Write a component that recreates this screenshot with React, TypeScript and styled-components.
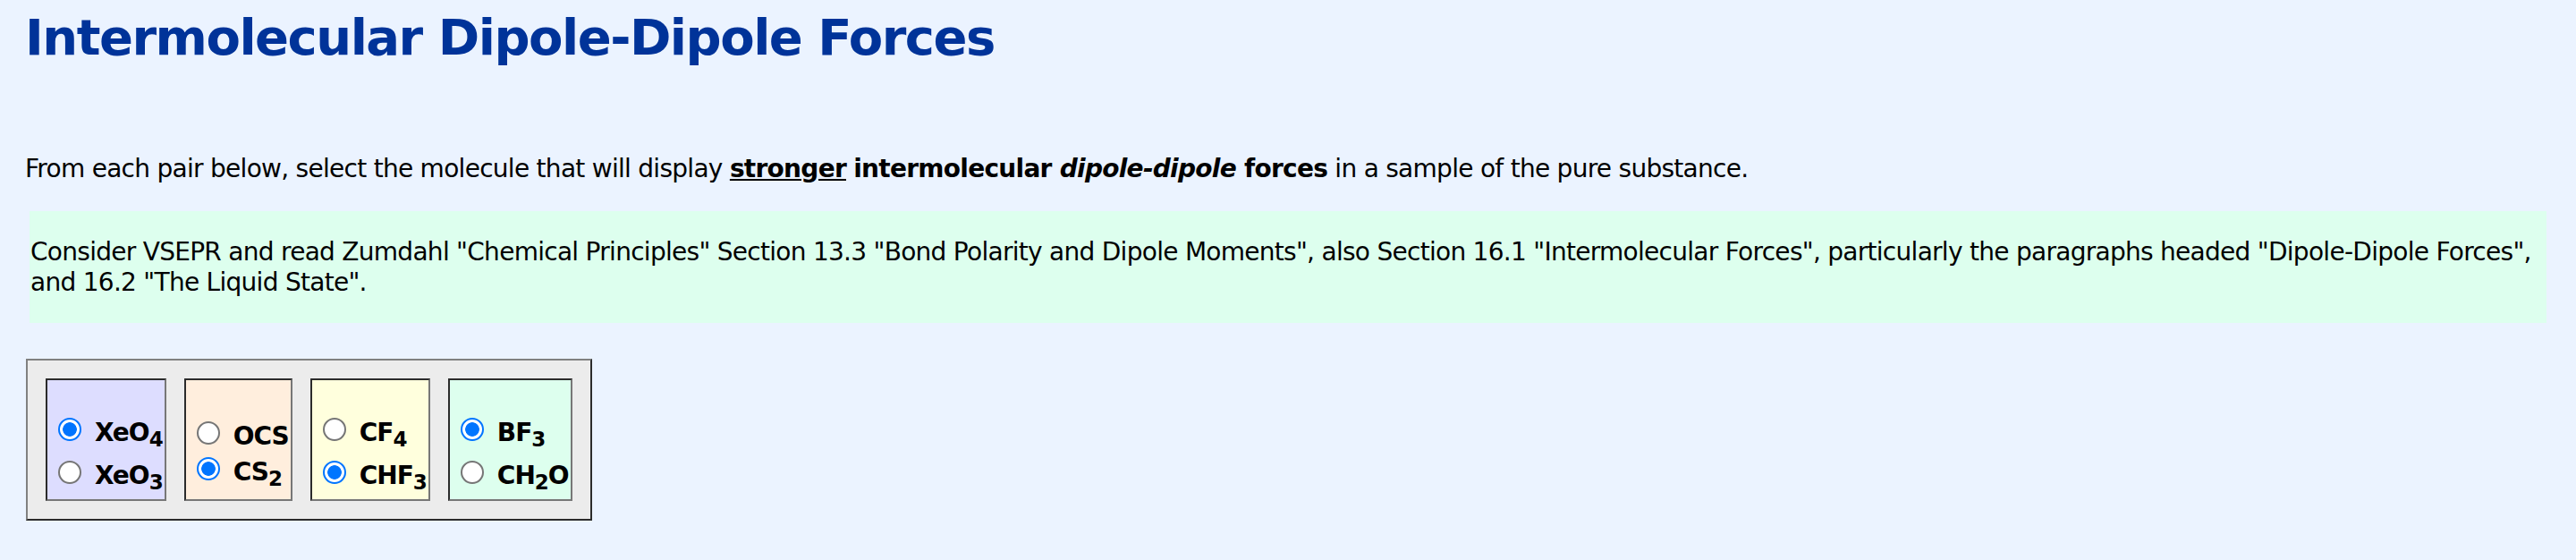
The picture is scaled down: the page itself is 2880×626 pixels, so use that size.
import { createGlobalStyle, styled } from "styled-components";

const GlobalStyle = createGlobalStyle`
  html, body {
    margin: 0;
    padding: 0;
    background: #ebf3ff;
  }
  body {
    font-family: "DejaVu Sans", Verdana, sans-serif;
    color: #000;
  }
`;

const Page = styled.div`
  padding: 8px 28px 40px;
  font-size: 28px;
  line-height: 34px;
  letter-spacing: -0.72px;
`;

const Title = styled.h1`
  margin: 0;
  font-size: 56px;
  line-height: 68px;
  font-weight: 700;
  letter-spacing: -1.5px;
  color: #003399;
`;

const Intro = styled.p`
  margin: 96px 0 0;
`;

const Notice = styled.div`
  margin: 30px 5px 0;
  padding: 29px 2px 28px 1px;
  background: #ddffee;
`;

const Quiz = styled.div`
  display: inline-flex;
  align-items: stretch;
  gap: 20px;
  margin: 40px 0 0 1px;
  padding: 20px;
  background: #ececec;
  border: 2px solid;
  border-color: #808080 #2b2b2b #2b2b2b #808080;
`;

const Pair = styled.div<{ $bg: string }>`
  display: flex;
  flex-direction: column;
  justify-content: center;
  padding: 31px 2px 6px;
  background: ${(p) => p.$bg};
  border: 2px solid;
  border-color: #2b2b2b #777 #777 #2b2b2b;
`;

const Option = styled.label<{ $sub: boolean }>`
  display: flex;
  align-items: flex-start;
  height: ${(p) => (p.$sub ? 48 : 40)}px;
  padding-top: 11px;
  box-sizing: border-box;
`;

const Radio = styled.input`
  appearance: none;
  flex: none;
  box-sizing: border-box;
  width: 26px;
  height: 26px;
  margin: 0 6px 0 10px;
  border: 2px solid #767676;
  border-radius: 50%;
  background: #fff;

  &:checked {
    border-color: #0075ff;
    background: radial-gradient(
      circle closest-side,
      #0075ff 0 68%,
      #fff 74%
    );
  }
`;

const Formula = styled.span`
  padding-left: 9px;
  font-size: 28px;
  font-weight: 700;
  line-height: 33px;
  letter-spacing: -1px;
  white-space: nowrap;

  sub {
    font-size: 23px;
    line-height: 0;
    vertical-align: -5.5px;
  }
`;

type Molecule = { parts: (string | [string])[]; checked?: boolean };

const pairs: { bg: string; items: Molecule[] }[] = [
  {
    bg: "#ddddff",
    items: [
      { parts: ["XeO", ["4"]], checked: true },
      { parts: ["XeO", ["3"]] },
    ],
  },
  {
    bg: "#ffeedd",
    items: [{ parts: ["OCS"] }, { parts: ["CS", ["2"]], checked: true }],
  },
  {
    bg: "#ffffdd",
    items: [
      { parts: ["CF", ["4"]] },
      { parts: ["CHF", ["3"]], checked: true },
    ],
  },
  {
    bg: "#ddffee",
    items: [
      { parts: ["BF", ["3"]], checked: true },
      { parts: ["CH", ["2"], "O"] },
    ],
  },
];

export default function App() {
  return (
    <>
      <GlobalStyle />
      <Page>
        <Title>Intermolecular Dipole-Dipole Forces</Title>
        <Intro>
          From each pair below, select the molecule that will display{" "}
          <b>
            <u>stronger</u>
          </b>{" "}
          <b>
            intermolecular <i>dipole-dipole</i> forces
          </b>{" "}
          in a sample of the pure substance.
        </Intro>
        <Notice>
          Consider VSEPR and read Zumdahl "Chemical Principles" Section 13.3
          "Bond Polarity and Dipole Moments", also Section 16.1 "Intermolecular
          Forces", particularly the paragraphs headed "Dipole-Dipole Forces",
          and 16.2 "The Liquid State".
        </Notice>
        <Quiz>
          {pairs.map((pair, i) => (
            <Pair key={i} $bg={pair.bg}>
              {pair.items.map((m, j) => (
                <Option key={j} $sub={m.parts.some((p) => Array.isArray(p))}>
                  <Radio
                    type="radio"
                    name={`pair${i}`}
                    defaultChecked={m.checked}
                  />
                  <Formula>
                    {m.parts.map((p, k) =>
                      Array.isArray(p) ? <sub key={k}>{p[0]}</sub> : p
                    )}
                  </Formula>
                </Option>
              ))}
            </Pair>
          ))}
        </Quiz>
      </Page>
    </>
  );
}
